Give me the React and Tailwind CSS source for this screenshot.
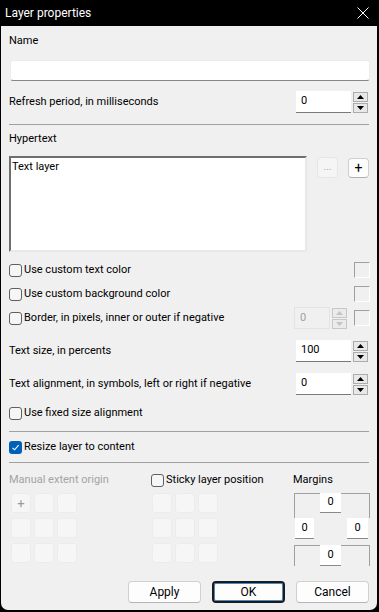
import React from 'react';

const FONT = { fontFamily: 'Roboto, "Liberation Sans", sans-serif' };

function Check({ checked }) {
    if (checked) {
        return (
            <span className="w-[13px] h-[13px] rounded-[3px] bg-[#005fb8] flex items-center justify-center shrink-0">
                <svg width="9" height="9" viewBox="0 0 9 9" fill="none"><path d="M1.5 4.8 L3.6 6.8 L7.6 2.2" stroke="white" strokeWidth="1.1" /></svg>
            </span>
        );
    }
    return <span className="w-[13px] h-[13px] rounded-[3px] border border-[#5f5f5f] bg-[#f6f6f6] shrink-0" />;
}

function Tri({ up, dim }) {
    return (
        <svg width="7" height="4" viewBox="0 0 7 4">
            <path d={up ? 'M0 4 L3.5 0 L7 4 Z' : 'M0 0 L3.5 4 L7 0 Z'} fill={dim ? '#a8a8a8' : '#000'} />
        </svg>
    );
}

function Spin({ value, dim }) {
    return (
        <div className="flex items-center h-[22px]">
            <div className={`h-[22px] flex items-center pl-[5px] ${dim ? 'w-[36px] text-[#a0a0a0] border border-[#e3e3e3]' : 'w-[55px] bg-white border-b border-[#7a7a7a]'}`}>{value}</div>
            <div className={`flex flex-col gap-[1px] ml-[2px] ${dim ? 'opacity-60' : ''}`}>
                <div className="w-[15px] h-[10px] bg-[#e8e8e8] border border-[#acacac] flex items-center justify-center"><Tri up dim={dim} /></div>
                <div className="w-[15px] h-[10px] bg-[#e8e8e8] border border-[#acacac] flex items-center justify-center"><Tri dim={dim} /></div>
            </div>
        </div>
    );
}

function ColorBox() {
    return <div className="w-[16px] h-[16px] border-t border-l border-[#a0a0a0] border-b border-r border-b-white border-r-white" />;
}

function Cell({ plus }) {
    return <div className="w-[20px] h-[20px] rounded-[3px] bg-[#f6f6f6] border border-[#ececec] flex items-center justify-center text-[#9a9a9a] text-[13px] leading-none">{plus ? '+' : ''}</div>;
}

function Grid3({ first }) {
    const cells = Array.from({ length: 9 }, (_, i) => i);
    return (
        <div className="grid grid-cols-[20px_20px_20px] gap-x-[3px] gap-y-[5px]">
            {cells.map(i => <Cell key={i} plus={first && i === 0} />)}
        </div>
    );
}

function Btn({ label, focus }) {
    return (
        <div className={`w-[73px] h-[22px] rounded-[4px] flex items-center justify-center bg-[#fdfdfd] text-[12px] ${focus ? 'border-2 border-[#1b1b1b] ring-1 ring-inset ring-[#4a8ac0]' : 'border border-[#d0d0d0] border-b-[#b5b5b5]'}`}>{label}</div>
    );
}

function MarginField({ className }) {
    return <div className={`bg-white border-b border-[#8a8a8a] flex items-center justify-center ${className}`}>0</div>;
}

export default function App() {
    return (
        <div className="w-[379px] h-[612px] bg-black flex flex-col text-[11px] text-black select-none" style={FONT}>
            {/* Title bar */}
            <div className="h-[26px] flex items-center justify-between pl-[5px] pr-[10px] text-white text-[12px] shrink-0">
                <span>Layer properties</span>
                <svg width="12" height="12" viewBox="0 0 12 12"><path d="M0.5 0.5 L11.5 11.5 M11.5 0.5 L0.5 11.5" stroke="white" strokeWidth="1" /></svg>
            </div>

            <div className="flex-1 ml-[1px] mr-[2px] mb-[2px] bg-[#f0f0f0] rounded-b-[7px] pl-[8px] pr-[7px] flex flex-col">
                <div className="h-[30px] flex items-center">Name</div>
                <div className="mt-[4px] ml-[1px] h-[21px] bg-white rounded-[3px] border border-[#ececec] border-b-[#868686]" />

                <div className="mt-[10px] h-[22px] flex items-center justify-between">
                    <span>Refresh period, in milliseconds</span>
                    <div className="mr-[2px]"><Spin value="0" /></div>
                </div>
                <div className="mt-[11px] h-px bg-[#a0a0a0] mr-[1px]" />

                <div className="h-[28px] flex items-center">Hypertext</div>
                <div className="mt-[3px] flex items-start">
                    <div className="w-[298px] h-[96px] bg-white border-2 border-t-[#6e6e6e] border-l-[#6e6e6e] border-b-[#e8e8e8] border-r-[#e8e8e8] px-[1px] leading-[18px]">Text layer</div>
                    <div className="ml-[10px] mt-[1px] w-[21px] h-[21px] rounded-[4px] bg-[#f5f5f5] border border-[#e6e6e6] flex items-center justify-center text-[#a8a8a8] text-[10px] pb-[3px]">...</div>
                    <div className="ml-[10px] mt-[2px] w-[21px] h-[20px] rounded-[4px] bg-[#fdfdfd] border border-[#d0d0d0] border-b-[#b0b0b0] flex items-center justify-center text-[14px]">+</div>
                </div>

                <div className="mt-[6px] h-[24px] flex items-center justify-between">
                    <div className="flex items-center gap-[2px]"><Check /><span>Use custom text color</span></div>
                    <ColorBox />
                </div>
                <div className="h-[24px] flex items-center justify-between">
                    <div className="flex items-center gap-[2px]"><Check /><span>Use custom background color</span></div>
                    <ColorBox />
                </div>
                <div className="h-[24px] flex items-center justify-between">
                    <div className="flex items-center gap-[2px]"><Check /><span>Border, in pixels, inner or outer if negative</span></div>
                    <div className="flex items-center gap-[7px]"><Spin value="0" dim /><ColorBox /></div>
                </div>

                <div className="mt-[10px] h-[22px] flex items-center justify-between">
                    <span>Text size, in percents</span>
                    <div className="mr-[2px]"><Spin value="100" /></div>
                </div>
                <div className="mt-[11px] h-[22px] flex items-center justify-between">
                    <span>Text alignment, in symbols, left or right if negative</span>
                    <div className="mr-[2px]"><Spin value="0" /></div>
                </div>
                <div className="mt-[8px] h-[20px] flex items-center gap-[2px]"><Check /><span>Use fixed size alignment</span></div>
                <div className="mt-[8px] h-px bg-[#a0a0a0] mr-[1px]" />
                <div className="h-[30px] flex items-center gap-[2px]"><Check checked /><span>Resize layer to content</span></div>
                <div className="h-px bg-[#a0a0a0] mr-[1px]" />

                <div className="flex mt-[8px]">
                    <div className="w-[142px]">
                        <div className="h-[18px] flex items-center text-[#a3a3a3]">Manual extent origin</div>
                        <div className="mt-[4px] ml-[2px]"><Grid3 first /></div>
                    </div>
                    <div className="w-[142px]">
                        <div className="h-[18px] flex items-center gap-[2px]"><Check /><span>Sticky layer position</span></div>
                        <div className="mt-[4px] ml-[1px]"><Grid3 /></div>
                    </div>
                    <div className="flex-1">
                        <div className="h-[18px] flex items-center">Margins</div>
                        <div className="mt-[4px] ml-[1px] grid grid-cols-[26px_21px_29px] grid-rows-[25px_27px_21px]">
                            <div className="border-t border-l border-[#a0a0a0]" />
                            <MarginField className="h-[20px]" />
                            <div className="border-t border-r border-[#a0a0a0]" />
                            <MarginField className="h-[21px] w-[19px] ml-[1px]" />
                            <div />
                            <MarginField className="h-[21px] w-[21px] ml-[6px]" />
                            <div className="border-t border-l border-[#a0a0a0]" />
                            <MarginField className="h-[21px]" />
                            <div className="border-t border-r border-[#a0a0a0]" />
                        </div>
                    </div>
                </div>

                <div className="mt-auto mb-[7px] flex justify-end gap-[11px] pr-[1px]">
                    <Btn label="Apply" />
                    <Btn label="OK" focus />
                    <Btn label="Cancel" />
                </div>
            </div>
        </div>
    );
}
